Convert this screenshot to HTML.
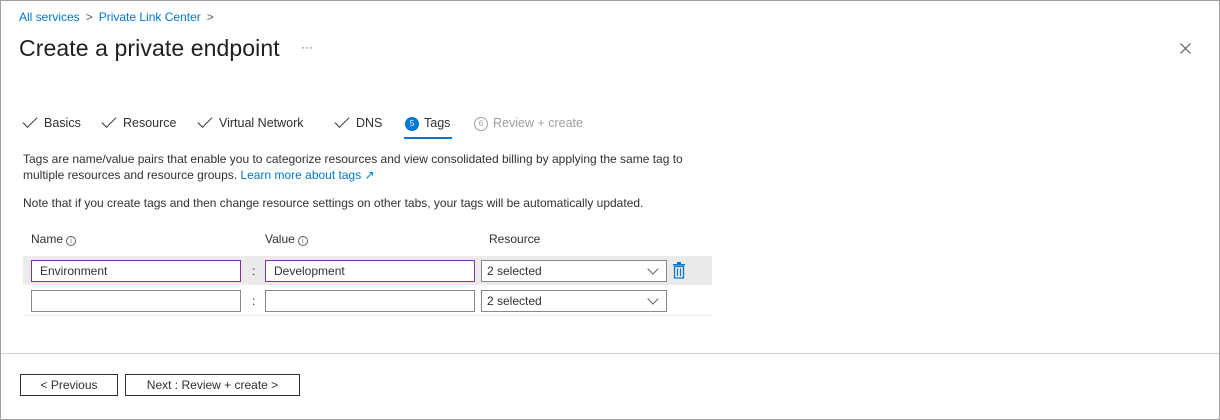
<!DOCTYPE html>
<html><head><style>
*{box-sizing:border-box;margin:0;padding:0}
body{width:1220px;height:420px;background:#fff;font-family:"Liberation Sans",sans-serif;color:#323130;position:relative;overflow:hidden}
.frame{position:absolute;left:0;top:0;width:1220px;height:420px;border:1px solid #a0a0a0}
.a{position:absolute;white-space:nowrap}
.bc{top:10px;left:19px;font-size:12px;color:#0078d4}
.bc span{color:#605e5c;margin:0 6px}
.title{top:35px;left:19px;font-size:23px;font-weight:400;color:#201f1e;letter-spacing:0.1px}
.tab{top:116px;font-size:12.5px;color:#323130}
.chk{display:inline-block;width:14px;height:7px;border-left:1.5px solid #323130;border-bottom:1.5px solid #323130;transform:rotate(-45deg);margin-right:7px;position:relative;top:-3px}
.circ{display:inline-block;width:14px;height:14px;border-radius:50%;font-size:8px;text-align:center;line-height:14px;margin-right:5px;vertical-align:1px}
.p{font-size:12px;color:#323130;left:23px}
.inp{position:absolute;height:22px;border:1px solid #8a8886;font-size:12px;padding:3px 8px;background:#fff}
.sel{position:absolute;height:22px;border:1px solid #8a8886;font-size:12px;padding:3px 5px;background:#fff}
.sel:after{content:"";position:absolute;right:9px;top:4px;width:7px;height:7px;border-right:1px solid #605e5c;border-bottom:1px solid #605e5c;transform:rotate(45deg)}
.btn{position:absolute;top:374px;height:22px;border:1px solid #323130;font-size:12px;text-align:center;line-height:20px;background:#fff}
.i{display:inline-block;width:10px;height:10px;border:1px solid #605e5c;border-radius:50%;font-size:7px;text-align:center;line-height:9px;color:#605e5c;vertical-align:0;margin-left:3px}
</style></head><body>
<div class="frame"></div>
<div class="a bc">All services<span>&gt;</span>Private Link Center<span>&gt;</span></div>
<div class="a title">Create a private endpoint</div>
<div class="a" style="top:40px;left:301px;font-size:12px;color:#605e5c">···</div>
<svg class="a" style="top:43px;left:1180px" width="11" height="11" viewBox="0 0 11 11"><path d="M0.5 0.5L10.5 10.5M10.5 0.5L0.5 10.5" stroke="#605e5c" stroke-width="1.2"/></svg>

<div class="a tab" style="left:23px"><span class="chk"></span>Basics</div>
<div class="a tab" style="left:102px"><span class="chk"></span>Resource</div>
<div class="a tab" style="left:198px"><span class="chk"></span>Virtual Network</div>
<div class="a tab" style="left:335px"><span class="chk"></span>DNS</div>
<div class="a tab" style="left:405px"><span class="circ" style="background:#0078d4;color:#fff">5</span>Tags</div>
<div class="a tab" style="left:474px;color:#a19f9d"><span class="circ" style="border:1px solid #a19f9d;line-height:12px">6</span>Review + create</div>
<div class="a" style="top:137px;left:404px;width:48px;height:2px;background:#0078d4"></div>

<div class="a p" style="top:152px">Tags are name/value pairs that enable you to categorize resources and view consolidated billing by applying the same tag to</div>
<div class="a p" style="top:168px">multiple resources and resource groups. <span style="color:#0078d4">Learn more about tags ↗</span></div>
<div class="a p" style="top:196px">Note that if you create tags and then change resource settings on other tabs, your tags will be automatically updated.</div>

<div class="a" style="top:232px;left:31px;font-size:12px">Name<span class="i">i</span></div>
<div class="a" style="top:232px;left:265px;font-size:12px">Value<span class="i">i</span></div>
<div class="a" style="top:232px;left:489px;font-size:12px">Resource</div>

<div class="a" style="top:256px;left:23px;width:689px;height:29px;background:#edebe9"></div>
<div class="inp" style="top:260px;left:31px;width:210px;border-color:#8a2da5">Environment</div>
<div class="a" style="top:264px;left:252px;font-size:12px">:</div>
<div class="inp" style="top:260px;left:265px;width:210px;border-color:#8a2da5">Development</div>
<div class="sel" style="top:260px;left:481px;width:186px">2 selected</div>
<svg class="a" style="top:262px;left:672px" width="14" height="17" viewBox="0 0 14 17"><rect x="1" y="2" width="12" height="1.5" fill="#0078d4"/><rect x="5" y="0" width="4" height="2" fill="#0078d4"/><path d="M2.5 4.5h9v11.5h-9z" fill="none" stroke="#0078d4" stroke-width="1.3"/><path d="M5.5 6.5v7.5M8.5 6.5v7.5" stroke="#0078d4" stroke-width="1.2"/></svg>

<div class="inp" style="top:290px;left:31px;width:210px"></div>
<div class="a" style="top:294px;left:252px;font-size:12px">:</div>
<div class="inp" style="top:290px;left:265px;width:210px"></div>
<div class="sel" style="top:290px;left:481px;width:186px">2 selected</div>
<div class="a" style="top:315px;left:23px;width:689px;height:1px;background:#edebe9"></div>

<div class="a" style="top:353px;left:1px;width:1218px;height:1px;background:#d2d0ce"></div>
<div class="btn" style="left:20px;width:98px">&lt; Previous</div>
<div class="btn" style="left:125px;width:175px">Next : Review + create &gt;</div>
</body></html>
